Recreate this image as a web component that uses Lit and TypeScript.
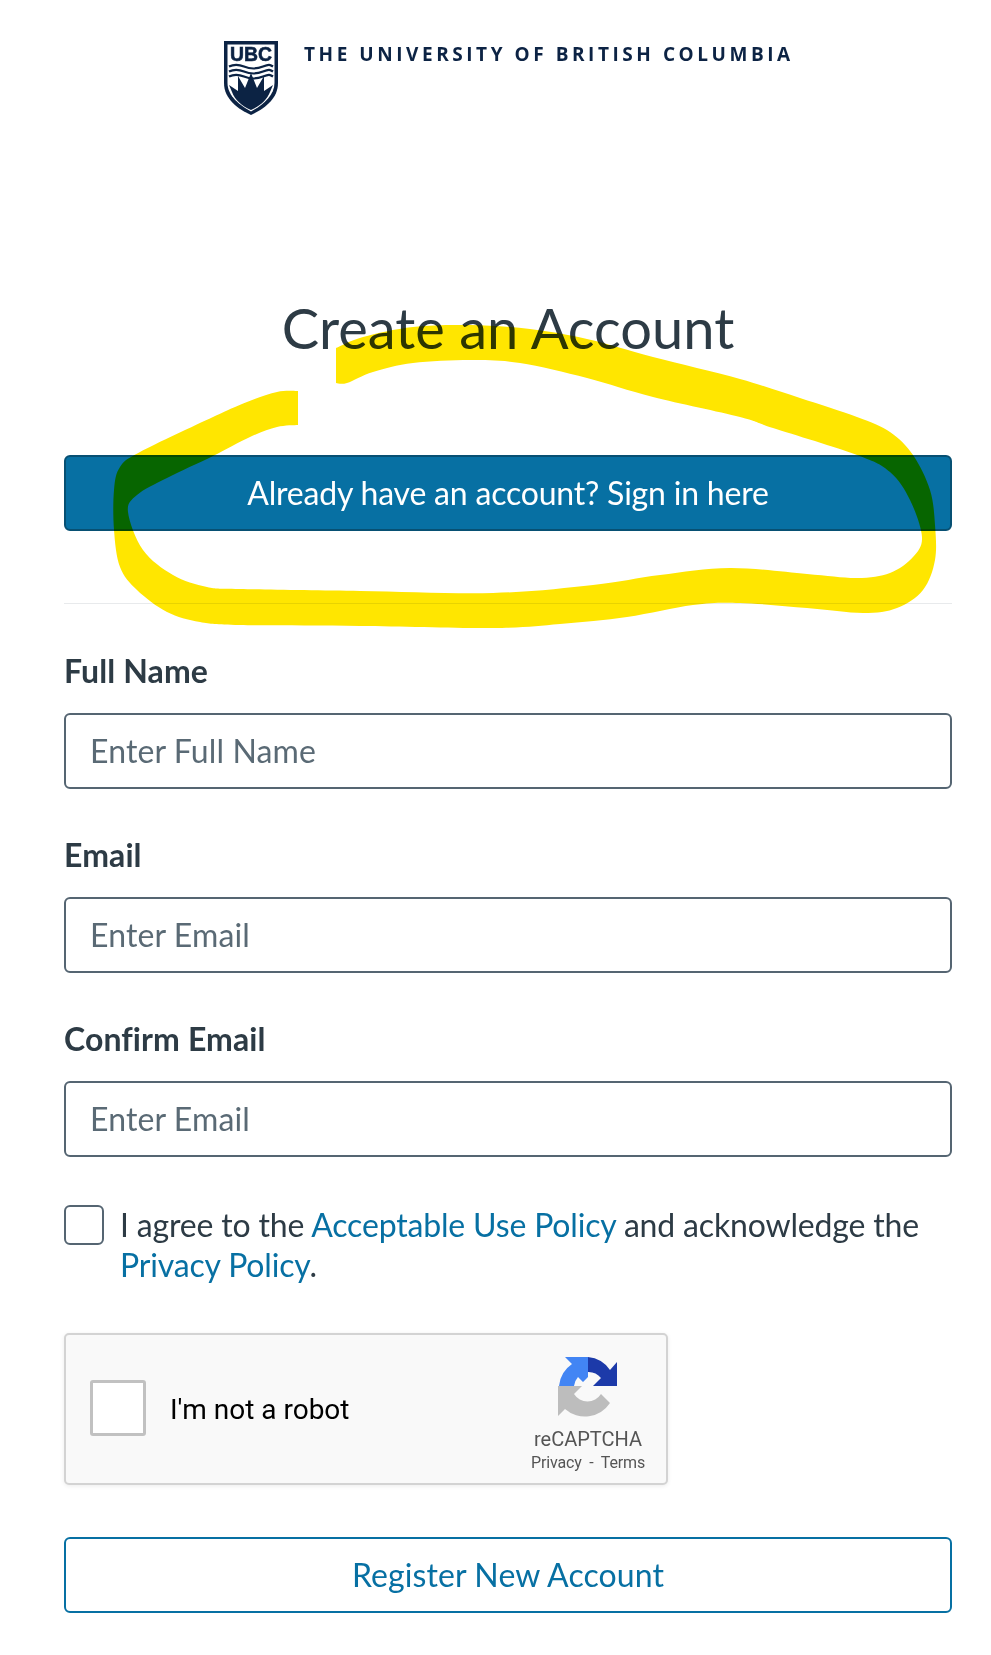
import { LitElement, html, css } from "lit";
import { customElement } from "lit/decorators.js";

type Pt = [number, number];

// highlighter stroke, traced from the top end clockwise, then back along the inside
const OUTER: Pt[] = [
	[336, 348], [363, 337], [413, 327], [470, 325], [530, 329], [587, 339], [653, 357], [740, 379],
	[800, 398], [857, 417], [890, 432], [913, 455], [930, 490], [935, 525], [935, 560], [923, 590],
	[897, 608], [863, 613], [807, 608], [740, 603], [693, 605], [627, 617], [560, 624], [493, 628],
	[360, 626], [240, 625], [200, 622], [167, 612], [137, 590], [120, 567], [114, 530], [114, 490],
	[120, 467], [140, 452], [213, 417], [247, 402], [277, 392], [298, 391],
];
const INNER: Pt[] = [
	[298, 425], [277, 427], [250, 437], [213, 456], [167, 478], [137, 495], [128, 512], [143, 550],
	[173, 575], [207, 587], [240, 589], [360, 591], [493, 593], [593, 585], [660, 575], [730, 568],
	[807, 574], [857, 578], [890, 573], [913, 557], [922, 537], [910, 500], [890, 472], [857, 455],
	[773, 428], [740, 417], [653, 397], [587, 378], [520, 363], [470, 360], [413, 363], [373, 372],
	[347, 383], [336, 383],
];

function smooth(pts: Pt[]) {
	let d = "";
	for (let i = 0; i < pts.length - 1; i++) {
		const p0 = pts[Math.max(i - 1, 0)];
		const p1 = pts[i];
		const p2 = pts[i + 1];
		const p3 = pts[Math.min(i + 2, pts.length - 1)];
		const c1 = [p1[0] + (p2[0] - p0[0]) / 6, p1[1] + (p2[1] - p0[1]) / 6];
		const c2 = [p2[0] - (p3[0] - p1[0]) / 6, p2[1] - (p3[1] - p1[1]) / 6];
		d += `C${c1[0]} ${c1[1]} ${c2[0]} ${c2[1]} ${p2[0]} ${p2[1]}`;
	}
	return d;
}

const MARKER = `M${OUTER[0].join(" ")}${smooth(OUTER)}L${INNER[0].join(" ")}${smooth(INNER)}Z`;

@customElement("app-root")
export class AppRoot extends LitElement {
	static styles = css`
		:host {
			display: block;
			position: relative;
			box-sizing: border-box;
			height: 1655px;
			padding: 41px 39px 0 64px;
			background: #fff;
			color: #2d3b45;
			font-family: Lato, "Liberation Sans", sans-serif;
			font-size: 32px;
			overflow: hidden;
		}
		a { color: #0770a3; text-decoration: none; }

		.brand {
			display: flex;
			align-items: flex-start;
			height: 74px;
			padding-left: 160px;
			gap: 26px;
		}
		.brand svg { display: block; flex: none; }
		.wordmark {
			margin-top: 1px;
			font-family: "Open Sans", sans-serif;
			font-size: 19px;
			font-weight: 700;
			line-height: 24px;
			letter-spacing: 3.55px;
			color: #0c2344;
			white-space: nowrap;
		}

		h1 {
			margin: 179px 0 93px;
			font-size: 56px;
			font-weight: 400;
			line-height: 68px;
			text-align: center;
		}

		.btn {
			display: block;
			box-sizing: border-box;
			height: 76px;
			line-height: 72px;
			border-radius: 6px;
			text-align: center;
		}
		.btn.primary {
			background: #0770a3;
			border: 2px solid #075073;
			color: #fff;
			letter-spacing: -0.2px;
		}
		.btn.outline {
			margin-top: 52px;
			background: #fff;
			border: 2px solid #0770a3;
			color: #0770a3;
			letter-spacing: 0.1px;
		}

		hr {
			margin: 72px 0 43px;
			border: 0;
			border-top: 1px solid #e8eaec;
		}

		form { display: flex; flex-direction: column; gap: 42px; }
		.field label {
			display: block;
			margin-bottom: 18px;
			font-weight: 700;
			line-height: 48px;
			letter-spacing: 0.1px;
		}
		.field input {
			display: block;
			box-sizing: border-box;
			width: 100%;
			height: 76px;
			padding: 0 24px 2px;
			border: 2px solid #556572;
			border-radius: 6px;
			font: inherit;
			letter-spacing: 0.12px;
			color: inherit;
			background: #fff;
		}
		.field input::placeholder { color: #5a6a75; opacity: 1; }

		.agree {
			display: flex;
			gap: 16px;
			margin-top: 48px;
			line-height: 40px;
			letter-spacing: -0.17px;
		}
		.box {
			flex: none;
			box-sizing: border-box;
			width: 40px;
			height: 40px;
			border: 2px solid #556572;
			border-radius: 6px;
		}

		.captcha {
			display: flex;
			align-items: center;
			box-sizing: border-box;
			width: 604px;
			height: 152px;
			margin-top: 48px;
			padding: 0 24px;
			background: #f9f9f9;
			border: 2px solid #d3d3d3;
			border-radius: 5px;
			box-shadow: 0 1px 4px rgba(0, 0, 0, 0.08);
			font-family: Roboto, sans-serif;
			color: #000;
		}
		.tick {
			flex: none;
			box-sizing: border-box;
			width: 56px;
			height: 56px;
			margin-bottom: 3px;
			background: #fff;
			border: 3px solid #c1c1c1;
			border-radius: 3px;
		}
		.captcha .robot {
			flex: 1;
			margin-left: 24px;
			font-size: 28px;
		}
		.badge {
			display: flex;
			flex-direction: column;
			align-items: center;
			align-self: flex-start;
			width: 120px;
			margin: 22px -6px 0 0;
			color: #555;
		}
		.badge .name { margin-top: 10px; font-size: 20px; line-height: 24px; }
		.badge .links {
			margin-top: 1px;
			font-size: 16px;
			letter-spacing: -0.15px;
			line-height: 22px;
			white-space: pre;
		}

		.marker {
			position: absolute;
			left: 0;
			top: 0;
			mix-blend-mode: multiply;
			pointer-events: none;
		}
	`;

	private logo() {
		return html`<svg width="54" height="74" viewBox="0 0 54 74">
			<path fill="#0c2344" d="M0 0H54V42C54 58 40 68 27 74C14 68 0 58 0 42Z" />
			<path fill="#fff" d="M3.5 3.5H50.5V42C50.5 55 38 64.5 27 70.5C16 64.5 3.5 55 3.5 42Z" />
			<text x="27" y="19.5" text-anchor="middle" textLength="42" lengthAdjust="spacingAndGlyphs"
				font-family="Liberation Sans, sans-serif" font-weight="700" font-size="20.5"
				fill="#0c2344" stroke="#0c2344" stroke-width="0.6">UBC</text>
			<g fill="none" stroke="#0c2344" stroke-width="2.2">
				<path d="M5 25.5C10 23 14 23 20 25.5S33 28 39 25.5 46 23.5 49 25.5" />
				<path d="M5 30.5C10 28 14 28 20 30.5S33 33 39 30.5 46 28.5 49 30.5" />
				<path d="M5 35.5C10 33 14 33 20 35.5S33 38 39 35.5 46 33.5 49 35.5" />
			</g>
			<path fill="#0c2344" d="M27 69C18 65 11 59 8 51L5 44L14 50L14 35L21 47L27 32L33 47L40 35L40 50L49 44L46 51C43 59 36 65 27 69Z" />
		</svg>`;
	}

	private recaptchaIcon() {
		return html`<svg width="60" height="60" viewBox="0 0 60 60">
			<path fill="#1c3aa9" d="M30 0A30 30 0 0 1 52 13L59 5V29H35L43 21A16 16 0 0 0 30 15Z" />
			<path fill="#4285f4" d="M30 0H7L14 7A30 30 0 0 0 1 29H16A16 16 0 0 1 20 20L25 25L30 20Z" />
			<path fill="#bdbdbd" d="M0 29H24L16 37A16 16 0 0 0 43 37L52 46A30 30 0 0 1 7 52L0 59Z" />
		</svg>`;
	}

	render() {
		return html`
			<header class="brand">
				${this.logo()}
				<div class="wordmark">THE UNIVERSITY OF BRITISH COLUMBIA</div>
			</header>

			<h1>Create an Account</h1>
			<a class="btn primary" href="#">Already have an account? Sign in here</a>
			<hr />

			<form>
				<div class="field">
					<label>Full Name</label>
					<input type="text" placeholder="Enter Full Name" />
				</div>
				<div class="field">
					<label>Email</label>
					<input type="email" placeholder="Enter Email" />
				</div>
				<div class="field">
					<label>Confirm Email</label>
					<input type="email" placeholder="Enter Email" />
				</div>
			</form>

			<div class="agree">
				<div class="box"></div>
				<div>I agree to the <a href="#">Acceptable Use Policy</a> and acknowledge the <a href="#">Privacy Policy</a>.</div>
			</div>

			<div class="captcha">
				<div class="tick"></div>
				<div class="robot">I'm not a robot</div>
				<div class="badge">
					${this.recaptchaIcon()}
					<div class="name">reCAPTCHA</div>
					<div class="links">Privacy  -  Terms</div>
				</div>
			</div>

			<a class="btn outline" href="#">Register New Account</a>

			<svg class="marker" width="991" height="1655" viewBox="0 0 991 1655">
				<path fill="#ffe600" d=${MARKER} />
			</svg>
		`;
	}
}
